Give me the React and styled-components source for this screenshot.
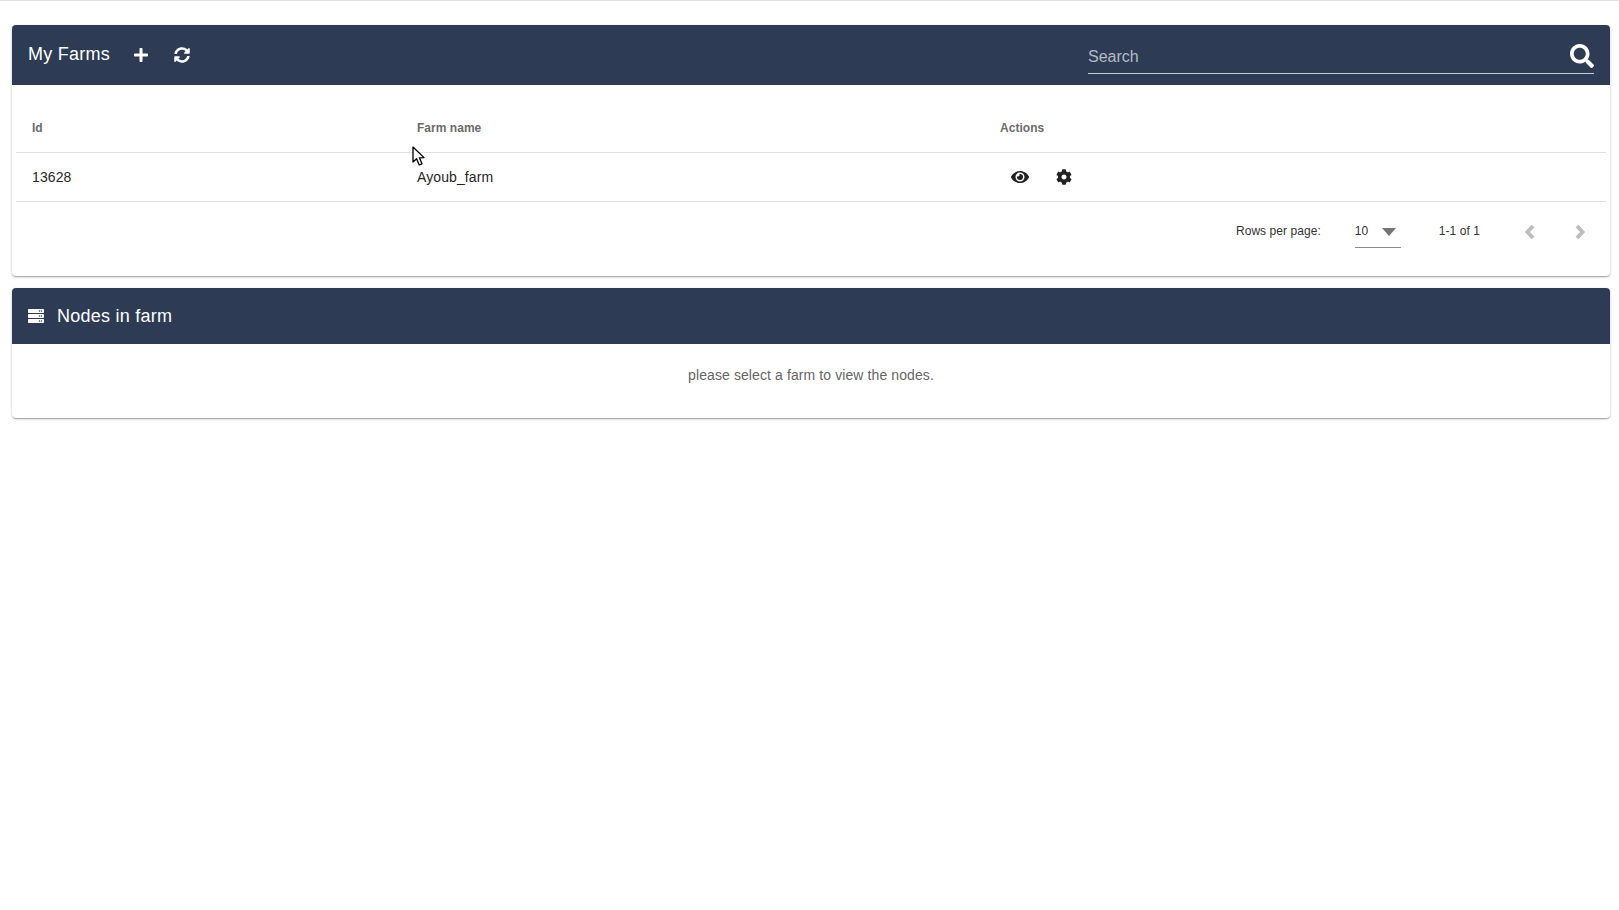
import styled, { createGlobalStyle } from 'styled-components'
import { FaPlus, FaSyncAlt, FaSearch, FaEye, FaCog, FaServer } from 'react-icons/fa'

const GlobalStyle = createGlobalStyle`
  html, body {
    margin: 0;
    padding: 0;
    background: #fff;
    font-family: "Liberation Sans", Arial, sans-serif;
  }
`

export default function App() {
  return (
    <Page>
      <GlobalStyle />
      <TopLine />
      <Content>
        <Card>
          <FarmsHeader>
            <Title>My Farms</Title>
            <HeaderIcon $left={23}><FaPlus size={16} /></HeaderIcon>
            <HeaderIcon $left={25}><FaSyncAlt size={16} /></HeaderIcon>
            <SearchBox>
              <SearchInput placeholder="Search" readOnly />
              <SearchIcon><FaSearch size={24} /></SearchIcon>
            </SearchBox>
          </FarmsHeader>
          <TableWrap>
            <Table>
              <colgroup>
                <col width="385" />
                <col width="583" />
                <col />
              </colgroup>
              <thead>
                <tr>
                  <HeadCell>Id</HeadCell>
                  <HeadCell>Farm name</HeadCell>
                  <HeadCell>Actions</HeadCell>
                </tr>
              </thead>
              <tbody>
                <tr>
                  <BodyCell>13628</BodyCell>
                  <BodyCell>Ayoub_farm</BodyCell>
                  <BodyCell>
                    <Actions>
                      <ActionIcon><FaEye size={18} /></ActionIcon>
                      <ActionIcon><FaCog size={16} /></ActionIcon>
                    </Actions>
                  </BodyCell>
                </tr>
              </tbody>
            </Table>
            <Pagination>
              <PageLabel>Rows per page:</PageLabel>
              <RowsSelect>
                <RowsValue>10</RowsValue>
                <Caret viewBox="0 0 14 8" width="14" height="8">
                  <path d="M0 0 H14 L7 8 Z" fill="#757575" />
                </Caret>
              </RowsSelect>
              <PageCount>1-1 of 1</PageCount>
              <Chevron viewBox="0 0 10 16" width="10" height="16">
                <polyline points="8,2 2.4,8 8,14" />
              </Chevron>
              <Chevron $gap={40} viewBox="0 0 10 16" width="10" height="16">
                <polyline points="2,2 7.6,8 2,14" />
              </Chevron>
            </Pagination>
          </TableWrap>
          <Cursor viewBox="0 0 14 21" width="14" height="21">
            <path d="M1 1 L1 16 L4.6 12.8 L7.2 19 L10 17.8 L7.4 11.8 L12 11.6 Z" fill="#fff" stroke="#000" strokeWidth="1.3" strokeLinejoin="round" />
          </Cursor>
        </Card>
        <Card>
          <NodesHeader>
            <FaServer size={16} />
            <NodesTitle>Nodes in farm</NodesTitle>
          </NodesHeader>
          <EmptyText>please select a farm to view the nodes.</EmptyText>
        </Card>
      </Content>
    </Page>
  )
}

const Page = styled.div`
  width: 100%;
  min-height: 910px;
  background: #fff;
`
const TopLine = styled.div`
  height: 1px;
  background: #e0e0e0;
`
const Content = styled.div`
  display: flex;
  flex-direction: column;
  gap: 12px;
  padding: 24px 9px 0 12px;
`
const Card = styled.section`
  position: relative;
  background: #fff;
  border-radius: 4px;
  box-shadow: 0 1px 3px 0 rgba(0, 0, 0, 0.2), 0 1px 1px 0 rgba(0, 0, 0, 0.14), 0 2px 1px -1px rgba(0, 0, 0, 0.12);
`
const FarmsHeader = styled.header`
  display: flex;
  align-items: center;
  height: 60px;
  padding: 0 16px;
  background: #2d3c54;
  border-radius: 4px 4px 0 0;
  color: #fff;
`
const Title = styled.h2`
  margin: 0 0 3px;
  font-size: 18px;
  font-weight: 400;
  line-height: 24px;
  letter-spacing: 0.25px;
`
const HeaderIcon = styled.span`
  display: flex;
  margin-left: ${({ $left }) => $left}px;
  color: #fff;
`
const SearchBox = styled.div`
  display: flex;
  align-items: center;
  width: 506px;
  height: 33px;
  margin: 3px 0 0 auto;
  border-bottom: 1px solid #c5ccd6;
`
const SearchInput = styled.input`
  flex: 1;
  min-width: 0;
  margin-top: 2px;
  padding: 0;
  border: none;
  outline: none;
  background: transparent;
  color: #fff;
  font-family: inherit;
  font-size: 16px;
  &::placeholder {
    color: #b4bac4;
    opacity: 1;
  }
`
const SearchIcon = styled.span`
  display: flex;
  color: #fff;
`
const TableWrap = styled.div`
  padding: 0 4px;
`
const Table = styled.table`
  width: 100%;
  border-collapse: collapse;
  table-layout: fixed;
`
const HeadCell = styled.th`
  height: 67px;
  padding: 20px 16px 0;
  box-sizing: border-box;
  border-bottom: 1px solid #e0e0e0;
  color: #6b6b6b;
  font-size: 12px;
  font-weight: 700;
  text-align: left;
  letter-spacing: 0.03px;
`
const BodyCell = styled.td`
  height: 49px;
  padding: 0 16px;
  box-sizing: border-box;
  border-bottom: 1px solid #e0e0e0;
  color: #262626;
  font-size: 14px;
  letter-spacing: 0.1px;
`
const Actions = styled.div`
  display: flex;
  align-items: center;
  gap: 27px;
  padding-left: 11px;
`
const ActionIcon = styled.span`
  display: flex;
  color: #222;
`
const Pagination = styled.div`
  display: flex;
  align-items: center;
  justify-content: flex-end;
  height: 58px;
  padding: 0 21px 16px 0;
  color: #333;
  font-size: 12px;
  letter-spacing: 0.06px;
`
const PageLabel = styled.span`
  margin-right: 34px;
`
const RowsSelect = styled.div`
  position: relative;
  display: flex;
  align-items: center;
  width: 46px;
  height: 34px;
  box-sizing: border-box;
  border-bottom: 1px solid #8a8a8a;
`
const RowsValue = styled.span`
  padding-top: 2px;
`
const Caret = styled.svg`
  position: absolute;
  right: 5px;
  top: 14px;
`
const PageCount = styled.span`
  margin-left: 38px;
  margin-right: 45px;
`
const Chevron = styled.svg`
  margin: 2px 0 0 ${({ $gap }) => $gap || 0}px;
  fill: none;
  stroke: #bdbdbd;
  stroke-width: 4;
`
const Cursor = styled.svg`
  position: absolute;
  left: 400px;
  top: 121px;
`
const NodesHeader = styled.header`
  display: flex;
  align-items: center;
  gap: 13px;
  height: 56px;
  padding: 0 16px;
  background: #2d3c54;
  border-radius: 4px 4px 0 0;
  color: #fff;
`
const NodesTitle = styled.h2`
  margin: 2px 0 0;
  font-size: 18px;
  font-weight: 400;
  letter-spacing: 0.25px;
`
const EmptyText = styled.p`
  margin: 0;
  height: 74px;
  padding-top: 23px;
  box-sizing: border-box;
  color: #666;
  font-size: 14px;
  text-align: center;
  letter-spacing: 0.1px;
`
